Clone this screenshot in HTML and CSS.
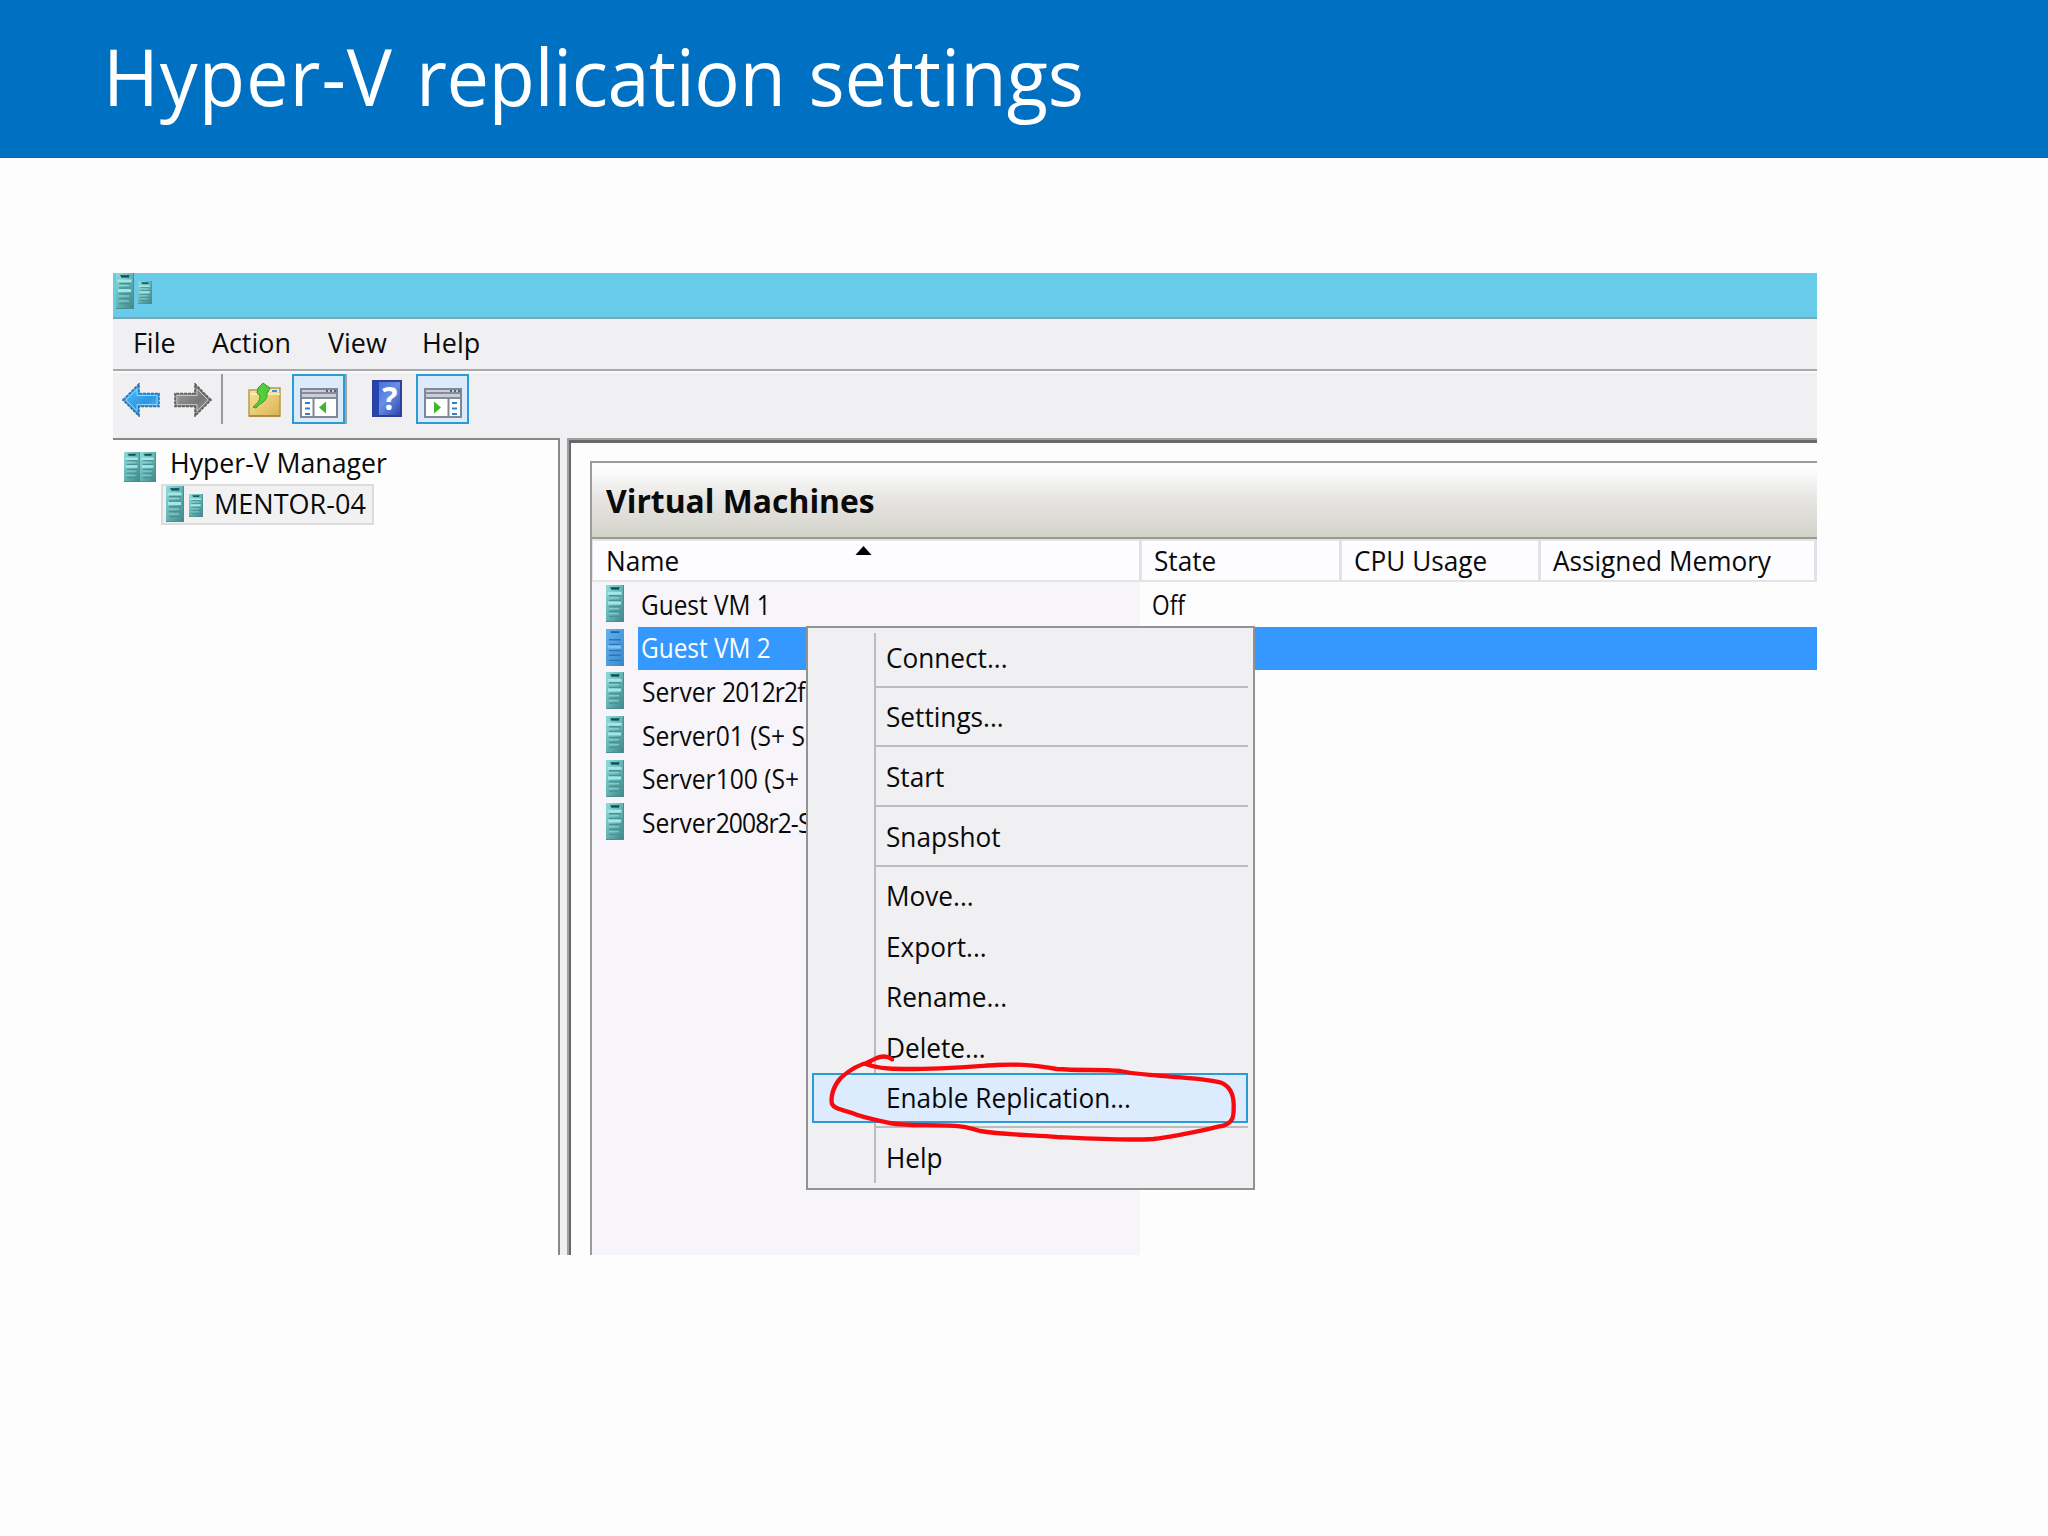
FILE: index.html
```html
<!DOCTYPE html>
<html lang="en">
<head>
<meta charset="utf-8">
<title>Hyper-V replication settings</title>
<link rel="stylesheet" href="styles.css">
</head>
<body>
<svg width="0" height="0" class="defs" aria-hidden="true">
  <defs>
    <linearGradient id="teal" x1="0" y1="0" x2="1" y2="1">
      <stop offset="0" stop-color="#8fdcdc"/><stop offset=".5" stop-color="#62b3b4"/><stop offset="1" stop-color="#3f8488"/>
    </linearGradient>
    <linearGradient id="azure" x1="0" y1="0" x2="1" y2="1">
      <stop offset="0" stop-color="#62b4ee"/><stop offset="1" stop-color="#3a86cc"/>
    </linearGradient>
    <linearGradient id="blue" x1="0" y1="0" x2="1" y2="1">
      <stop offset="0" stop-color="#5cc4fb"/><stop offset=".6" stop-color="#2b96e2"/><stop offset="1" stop-color="#5fc0f5"/>
    </linearGradient>
    <linearGradient id="grey" x1="0" y1="0" x2="1" y2="1">
      <stop offset="0" stop-color="#a5a5a5"/><stop offset=".6" stop-color="#777"/><stop offset="1" stop-color="#a8a8a8"/>
    </linearGradient>
    <linearGradient id="gold" x1="0" y1="0" x2="1" y2="1">
      <stop offset="0" stop-color="#fae69c"/><stop offset="1" stop-color="#d9b254"/>
    </linearGradient>
    <linearGradient id="book" x1="0" y1="0" x2="1" y2="1">
      <stop offset="0" stop-color="#3c62cf"/><stop offset=".5" stop-color="#6a8fe6"/><stop offset="1" stop-color="#2440a4"/>
    </linearGradient>
    <symbol id="server" viewBox="0 0 18 36" preserveAspectRatio="none">
      <rect width="18" height="36" fill="url(#teal)"/>
      <path d="M1.5 6.5h14v3h-14zM2 16h13v3H2z" fill="#a5e6e3"/>
      <path d="M4 2h10v1H4z" fill="#2f8186"/><path d="M5 2.500h8v2H5z" fill="#134b52"/>
      <path d="M3 10.500h12M3 15h12M3 21h12M3 25.500h12M3 30.500h12" stroke="#4a9296" stroke-width="1.300"/>
      <path d="M3 12.500h10M3 23h10M3 28h10" stroke="#8ed3d1" stroke-width="1"/>
      <path d="M17.500 0v36M0 35.500h18" stroke="#4a8e91"/>
    </symbol>
    <symbol id="server-selected" viewBox="0 0 18 36" preserveAspectRatio="none">
      <rect width="18" height="36" fill="url(#azure)"/>
      <path d="M2 16h13v3H2z" fill="#7cc2f7"/>
      <path d="M4.500 3h9" stroke="#1b5da0" stroke-width="1.600"/>
      <path d="M3 10.500h12M3 15h12M3 21h12M3 25.500h12M3 30.500h12" stroke="#2e74b8" stroke-width="1.300"/>
    </symbol>
  </defs>
</svg>

<main class="slide">
  <header class="banner"><h1 class="banner-title"><span class="loose">Hyper-V</span> <span class="snug">replication</span> settings</h1></header>

  <section class="window">
    <div class="titlebar">
      <svg class="server-lg"><use href="#server"/></svg>
      <svg class="server-sm"><use href="#server"/></svg>
    </div>

    <nav class="menubar">
      <span class="menubar-item file"><span class="label">File</span></span>
      <span class="menubar-item action"><span class="label">Action</span></span>
      <span class="menubar-item view"><span class="label">View</span></span>
      <span class="menubar-item"><span class="label">Help</span></span>
    </nav>

    <div class="toolbar">
      <svg class="arrow" viewBox="0 0 38 34">
        <path d="M1 17 17 1v9.500h20v13H17V33z" fill="url(#blue)" stroke="#2f6ea6" stroke-width="1.600" stroke-dasharray="3 1"/>
        <path d="M4 17 15 6v6.500h20v9H15V28z" fill="none" stroke="#8ed6fb" stroke-width="1"/>
      </svg>
      <svg class="arrow forward" viewBox="0 0 38 34">
        <path d="M37 17 21 1v9.500H1v13h20V33z" fill="url(#grey)" stroke="#5a5a5a" stroke-width="1.600" stroke-dasharray="3 1"/>
        <path d="M34 17 23 6v6.500H3v9h20V28z" fill="none" stroke="#c4c4c4" stroke-width="1"/>
      </svg>
      <i class="divider"></i>
      <svg class="folder" viewBox="0 0 34 36">
        <path d="M1 8h9l2-2h20v28H1z" fill="url(#gold)" stroke="#b99a4c" stroke-width="1.500"/>
        <path d="M2 12h30" stroke="#fff0b8" stroke-width="1.500"/>
        <path d="M21 7h10v3.500H21z" fill="#d9edf7"/><path d="M24 8h5v2h-5z" fill="#3b93d6"/>
        <path d="M1 34h31" stroke="#a5843a" stroke-width="1.500"/>
        <path d="M15 1 22 6l-2 4h-1c1 7-3 10-7 12l-4 4-3-1c3-3 7-5 7-11L9 11l1-5z" fill="#55cc3c" stroke="#2f9d2a" stroke-width="1"/>
      </svg>
      <span class="toggle">
        <svg viewBox="0 0 38 30">
          <path d="M1 1h36v28H1z" fill="#fff" stroke="#7f8796" stroke-width="2"/>
          <path d="M2 2h34v8H2z" fill="#c9ced8"/><path d="M2 5h34M2 10h34" stroke="#858c9a" stroke-width="2"/>
          <path d="M26 3h2m2 0h2m2 0h2" stroke="#5a6170" stroke-width="2"/>
          <path d="M13.500 10v19" stroke="#7f8796" stroke-width="2"/>
          <path d="M5 15h5M5 20.500h5M5 26h5" stroke="#2f7fd0" stroke-width="2"/>
          <path d="M26 13.500v12l-7-6z" fill="#3fb52b"/>
        </svg>
      </span>
      <i class="shade"></i>
      <svg class="book" viewBox="0 0 30 37">
        <path d="M0 0h30v37H0z" fill="url(#book)"/>
        <path d="M0 0h7v37H0z" fill="#2444ae"/>
        <path d="M1 1h28v35H1z" fill="none" stroke="#2a409a" stroke-width="2"/>
        <text x="18" y="30" class="book-mark">?</text>
      </svg>
      <span class="toggle second">
        <svg viewBox="0 0 38 30">
          <path d="M1 1h36v28H1z" fill="#fff" stroke="#7f8796" stroke-width="2"/>
          <path d="M2 2h34v8H2z" fill="#c9ced8"/><path d="M2 5h34M2 10h34" stroke="#858c9a" stroke-width="2"/>
          <path d="M26 3h2m2 0h2m2 0h2" stroke="#5a6170" stroke-width="2"/>
          <path d="M24.500 10v19" stroke="#7f8796" stroke-width="2"/>
          <path d="M28 15h5M28 20.500h5M28 26h5" stroke="#2f7fd0" stroke-width="2"/>
          <path d="M10 13.500v12l7-6z" fill="#3fb52b"/>
        </svg>
      </span>
    </div>

    <div class="panes">
      <aside class="tree">
        <div class="tree-root">
          <span class="rack"><svg><use href="#server"/></svg><svg><use href="#server"/></svg></span>
          <span class="label">Hyper-V Manager</span>
        </div>
        <div class="tree-node">
          <svg class="server-lg"><use href="#server"/></svg>
          <svg class="server-sm"><use href="#server"/></svg>
          <span class="label">MENTOR-04</span>
        </div>
      </aside>

      <div class="details">
        <div class="panel">
          <h2 class="panel-title"><span class="label">Virtual Machines</span></h2>
          <div class="columns">
            <div class="col"><span class="label">Name</span><i class="sort"><svg viewBox="0 0 16 9"><path d="M8 0 16 9H0z"/></svg></i></div>
            <div class="col"><span class="label">State</span></div>
            <div class="col"><span class="label">CPU Usage</span></div>
            <div class="col"><span class="label">Assigned Memory</span></div>
          </div>
          <div class="rows">
            <div class="row"><svg><use href="#server"/></svg><div class="cell"><span class="label">Guest VM 1</span></div><div class="state"><span class="label">Off</span></div></div>
            <div class="row selected"><svg><use href="#server-selected"/></svg><div class="cell"><span class="label">Guest VM 2</span></div></div>
            <div class="row server"><svg><use href="#server"/></svg><div class="cell"><span class="label">Server <span class="digits">2012r2fr</span></span></div></div>
            <div class="row server"><svg><use href="#server"/></svg><div class="cell"><span class="label">Server01 (S+ S</span></div></div>
            <div class="row server"><svg><use href="#server"/></svg><div class="cell"><span class="label">Server100 (S+</span></div></div>
            <div class="row server"><svg><use href="#server"/></svg><div class="cell"><span class="label">Server<span class="digits">2008r2-S</span></span></div></div>
          </div>
        </div>
      </div>
    </div>
  </section>

  <div class="context-menu">
    <div class="item"><span class="label">Connect...</span></div>
    <div class="sep"></div>
    <div class="item"><span class="label">Settings...</span></div>
    <div class="sep"></div>
    <div class="item"><span class="label">Start</span></div>
    <div class="sep"></div>
    <div class="item"><span class="label">Snapshot</span></div>
    <div class="sep"></div>
    <div class="item"><span class="label">Move...</span></div>
    <div class="item"><span class="label">Export...</span></div>
    <div class="item"><span class="label">Rename...</span></div>
    <div class="item"><span class="label">Delete...</span></div>
    <div class="item active"><span class="label">Enable Replication...</span></div>
    <div class="sep"></div>
    <div class="item"><span class="label">Help</span></div>
  </div>

  <svg class="ink" viewBox="0 0 1440 1170">
    <path d="M306 538C290 526 274 528 258 535L225 551C255 563 296 567 340 567C440 568 540 560 620 555C700 551 745 558 800 567C870 572 930 568 990 573C1030 582 1090 585 1140 590C1200 594 1250 597 1290 607C1318 617 1330 640 1331 672C1332 712 1329 728 1300 737C1240 750 1170 768 1090 777C1000 782 900 776 800 771C720 765 640 764 570 753C540 743 510 738 480 737C400 734 330 738 290 727C240 717 215 712 180 697C150 687 133 686 126 672C121 650 130 618 152 594C176 572 205 553 240 546"/>
  </svg>
</main>
</body>
</html>
```
FILE: styles.css
```css
* { box-sizing: border-box; }

body {
  margin: 0;
  background: #fdfdfd;
  color: #0a0a0a;
  font: 28px/1.3 "Open Sans", "Noto Sans", sans-serif;
}

svg { display: block; flex: none; }
.defs { position: absolute; }

.slide {
  position: relative;
  width: 2048px;
  height: 1536px;
  overflow: hidden;
}

.label {
  display: inline-block;
  white-space: pre;
  transform: scaleX(.935);
  transform-origin: 0 50%;
}

.banner {
  display: flex;
  align-items: center;
  height: 158px;
  padding-left: 103px;
  background: #0070c3;
}

.banner-title {
  margin: 0 0 7px;
  color: #fff;
  font-size: 79px;
  font-weight: 400;
  font-kerning: none;
  line-height: 1;
  white-space: nowrap;
  word-spacing: 3.500px;
  transform: scaleX(.959);
  transform-origin: 0 50%;
}

.loose { letter-spacing: 1px; }
.snug { letter-spacing: -.5px; }

.window {
  display: flex;
  flex-direction: column;
  width: 1704px;
  height: 982px;
  margin: 115px 0 0 113px;
  background: #f0eff1;
}

.titlebar {
  display: flex;
  gap: 5px;
  height: 46px;
  padding-left: 3px;
  background: #68cbea;
  border-bottom: 2px solid #7ba5b3;
}

.titlebar .server-sm { margin-left: -1px; }

.server-lg { width: 18px; height: 36px; }
.server-sm { width: 14px; height: 23px; margin-top: 8px; }

.menubar {
  display: flex;
  align-items: center;
  height: 52px;
  padding: 0 0 3px 20px;
  border-bottom: 2px solid #a9a8ab;
}

.menubar .label { transform: scaleX(.96); }
.menubar-item { width: 57px; }
.menubar-item.file { width: 79px; }
.menubar-item.action { width: 116px; }
.menubar-item.view { width: 94px; }

.toolbar {
  display: flex;
  align-items: flex-start;
  height: 67px;
  padding: 1px 0 0 9px;
  border-top: 2px solid #fafafa;
}

.arrow { width: 38px; height: 34px; margin-top: 9px; }
.forward { margin-left: 14px; }
.divider { width: 2px; height: 50px; margin-left: 9px; background: #9b9a9d; }
.folder { width: 34px; height: 36px; margin: 8px 0 0 25px; }

.toggle {
  display: flex;
  align-items: flex-start;
  width: 53px;
  height: 50px;
  margin-left: 10px;
  padding: 12px 0 0 6px;
  background: #dcebfc;
  border: 2px solid #2a9bd4;
}

.toggle svg { width: 38px; height: 30px; }
.toggle.second { margin-left: 14px; }
.shade { width: 2px; height: 50px; background: #a3a2a5; }
.book { width: 30px; height: 37px; margin: 6px 0 0 25px; overflow: visible; }

.book-mark {
  fill: #fff;
  font: 700 32px/1 "Open Sans", sans-serif;
  text-anchor: middle;
}

.panes { display: flex; flex: 1; min-height: 0; }

.tree {
  width: 447px;
  padding: 11px 0 0 11px;
  background: #fdfdfd;
  border-top: 2px solid #88878a;
  border-right: 2px solid #88878a;
}

.tree .label { transform: scaleX(.952); }
.tree-root { display: flex; align-items: center; gap: 14px; height: 31px; }
.tree-root .label { margin-top: -9px; }
.rack { display: flex; }
.rack svg { width: 16px; height: 30px; }

.tree-node {
  display: flex;
  gap: 5px;
  width: 213px;
  height: 41px;
  margin: 2px 0 0 37px;
  padding: 0 0 0 3px;
  background: #f2f1f2;
  border: 2px solid #dcdbdd;
}

.tree-node .label { margin: -1px 0 0 6px; transform: scaleX(.965); }

.details {
  flex: 1;
  min-height: 0;
  margin-left: 7px;
  padding: 21px 0 0 21px;
  background: #fdfdfd;
  border: solid #a09fa2;
  border-width: 2px 0 0 2px;
  box-shadow: inset 2px 3px 0 #68676a;
}

.panel {
  display: flex;
  flex-direction: column;
  height: 100%;
  border: solid #9b9a9d;
  border-width: 2px 0 0 2px;
}

.panel-title {
  display: flex;
  align-items: center;
  height: 76px;
  margin: 0;
  padding: 2px 0 0 14px;
  font-size: 32px;
  background: linear-gradient(#fdfdfd 8%, #e6e5e3 50%, #d3d2c8);
  border-bottom: 2px solid #9a999a;
}

.panel-title .label { transform: scaleX(.995); }

.columns {
  display: grid;
  grid-template-columns: 549px 200px 199px 1fr;
  height: 43px;
  border: 2px solid #e4e3e6;
  border-right: 0;
  border-left-width: 1px;
}

.col {
  position: relative;
  display: flex;
  align-items: center;
  padding-left: 12px;
  background: #fdfcfe;
  border-right: 3px solid #e2e1e5;
}

.col:first-child { padding-left: 13px; }
.sort { position: absolute; left: 262px; top: 5px; }
.sort svg { width: 17px; height: 9px; }

.rows {
  flex: 1;
  padding-top: 1px;
  background: linear-gradient(90deg, #f7f5f9 548px, #fdfdfd 548px);
}

.row { display: flex; height: 43.700px; padding-left: 14px; }
.row > svg { width: 18px; height: 37px; margin-top: 2px; }

.cell {
  display: flex;
  align-items: center;
  width: 500px;
  height: 43.700px;
  margin-left: 14px;
  padding: 0 0 2px 3px;
}

.rows .label { transform: scaleX(.87); }
.server .cell { padding-left: 4px; }
.rows .server .label { transform: scaleX(.88); }
.digits { letter-spacing: -1px; }
.state { display: flex; align-items: center; margin-left: 14px; padding-bottom: 2px; }
.rows .state .label { transform: scaleX(.81); }
.selected .cell { flex: 1; color: #fff; background: #3498ff; }

.context-menu {
  position: absolute;
  left: 806px;
  top: 626px;
  width: 449px;
  height: 564px;
  padding: 4px;
  background: linear-gradient(#bcbbbe, #bcbbbe) 66px 5px / 2px 550px no-repeat, #f0eff1;
  border: 2px solid #929193;
}

.item {
  display: flex;
  align-items: center;
  height: 50.500px;
  padding: 0 0 1px 72px;
  border: 2px solid transparent;
}

.active { width: 436px; background: #dcebfe; border-color: #2a9bd4; }

.sep {
  height: 9.200px;
  margin: 0 0 0 64px;
  width: 372px;
  background: linear-gradient(#bcbbbe, #bcbbbe) 0 3px / 100% 2px no-repeat;
}

.ink {
  position: absolute;
  left: 790px;
  top: 880px;
  width: 480px;
  height: 390px;
}

.ink path {
  fill: none;
  stroke: #f8090d;
  stroke-width: 13;
  stroke-linecap: round;
  stroke-linejoin: round;
}
```
